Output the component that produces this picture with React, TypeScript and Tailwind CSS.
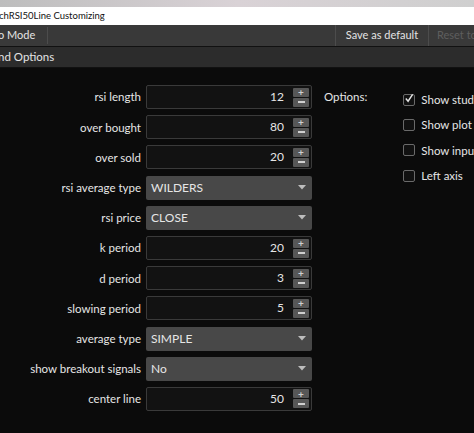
import React from 'react';

type Row =
  | { label: string; kind: 'num'; value: string }
  | { label: string; kind: 'select'; value: string };

const rows: Row[] = [
  { label: 'rsi length', kind: 'num', value: '12' },
  { label: 'over bought', kind: 'num', value: '80' },
  { label: 'over sold', kind: 'num', value: '20' },
  { label: 'rsi average type', kind: 'select', value: 'WILDERS' },
  { label: 'rsi price', kind: 'select', value: 'CLOSE' },
  { label: 'k period', kind: 'num', value: '20' },
  { label: 'd period', kind: 'num', value: '3' },
  { label: 'slowing period', kind: 'num', value: '5' },
  { label: 'average type', kind: 'select', value: 'SIMPLE' },
  { label: 'show breakout signals', kind: 'select', value: 'No' },
  { label: 'center line', kind: 'num', value: '50' },
];

const options = [
  { label: 'Show study', checked: true },
  { label: 'Show plot', checked: false },
  { label: 'Show input', checked: false },
  { label: 'Left axis', checked: false },
];

function NumberField({ value }: { value: string }) {
  return (
    <div className="flex h-[24px] w-[166px] items-center rounded-[2px] border border-[#3a3a3a] bg-[#121212] pl-2 pr-[2px]">
      <span className="flex-1 text-right text-[12px] text-[#e6e6e6]">{value}</span>
      <div className="ml-[9px] flex w-[16px] flex-col gap-[1px]">
        <div className="flex h-[9px] items-center justify-center rounded-[1px] bg-[#575757] text-[10px] font-bold leading-none text-[#cfcfcf]">+</div>
        <div className="flex h-[9px] items-center justify-center rounded-[1px] bg-[#575757]">
          <div className="h-[2px] w-[7px] bg-[#cfcfcf]" />
        </div>
      </div>
    </div>
  );
}

function SelectField({ value }: { value: string }) {
  return (
    <div className="flex h-[24px] w-[166px] items-center rounded-[2px] bg-[#484848] pl-[5px] pr-[6px]">
      <span className="flex-1 text-[12px] text-[#e6e6e6]">{value}</span>
      <svg width="8" height="5" viewBox="0 0 8 5">
        <path d="M0 0 L8 0 L4 4.5 Z" fill="#bdbdbd" />
      </svg>
    </div>
  );
}

export default function App() {
  return (
    <div
      className="flex h-[433px] w-[474px] flex-col overflow-hidden bg-[#0b0b0b]"
      style={{ fontFamily: 'Lato, "Open Sans", sans-serif' }}
    >
      <div className="h-[7px] bg-gradient-to-r from-[#bdbdbd] via-[#d9d2d6] to-[#cfcfcf]" />
      <div className="flex h-[18px] items-center bg-white">
        <span className="ml-[-1px] whitespace-nowrap text-[9.5px] text-[#111]">chRSI50Line Customizing</span>
      </div>
      <div className="flex h-[21px] items-center bg-[#393939] text-[11px] text-[#e4e4e4]">
        <span className="ml-[-2px] w-[50px] whitespace-nowrap border-r border-[#4c4c4c]">o Mode</span>
        <div className="flex-1" />
        <div className="flex h-full w-[93px] items-center justify-center whitespace-nowrap border-l border-[#4c4c4c]">Save as default</div>
        <div className="flex h-full w-[46px] items-center overflow-hidden whitespace-nowrap border-l border-[#4c4c4c] pl-[8px] text-[#5e5e5e]">Reset to</div>
      </div>
      <div className="flex h-[22px] items-center border-y border-[#111] bg-[#2c2c2c] text-[11.5px] text-[#e4e4e4]">
        <span className="ml-[-2px] whitespace-nowrap">nd Options</span>
      </div>

      <div className="mt-[14px] flex">
        <div className="flex flex-col">
          {rows.map((r) => (
            <div key={r.label} className="flex h-[30.2px] items-center">
              <span className="w-[146px] whitespace-nowrap pr-[5px] text-right text-[11.5px] text-[#e6e6e6]">{r.label}</span>
              {r.kind === 'num' ? <NumberField value={r.value} /> : <SelectField value={r.value} />}
            </div>
          ))}
        </div>

        <div className="ml-[12px] flex h-[30px] items-center text-[11.5px] text-[#e6e6e6]">Options:</div>

        <div className="ml-[36px] mt-[5px] flex flex-col">
          {options.map((o) => (
            <div key={o.label} className="flex h-[25.3px] items-center whitespace-nowrap text-[11.5px] text-[#e6e6e6]">
              <div className="mr-[6px] flex h-[12px] w-[12px] items-center justify-center rounded-[2px] border border-[#6a6a6a] bg-[#111]">
                {o.checked && (
                  <svg width="11" height="11" viewBox="0 0 11 11" className="mt-[-2px]">
                    <path d="M2 5.5 L4.5 8.5 L9.5 1" stroke="#e6e6e6" strokeWidth="1.6" fill="none" />
                  </svg>
                )}
              </div>
              {o.label}
            </div>
          ))}
        </div>
      </div>
    </div>
  );
}
